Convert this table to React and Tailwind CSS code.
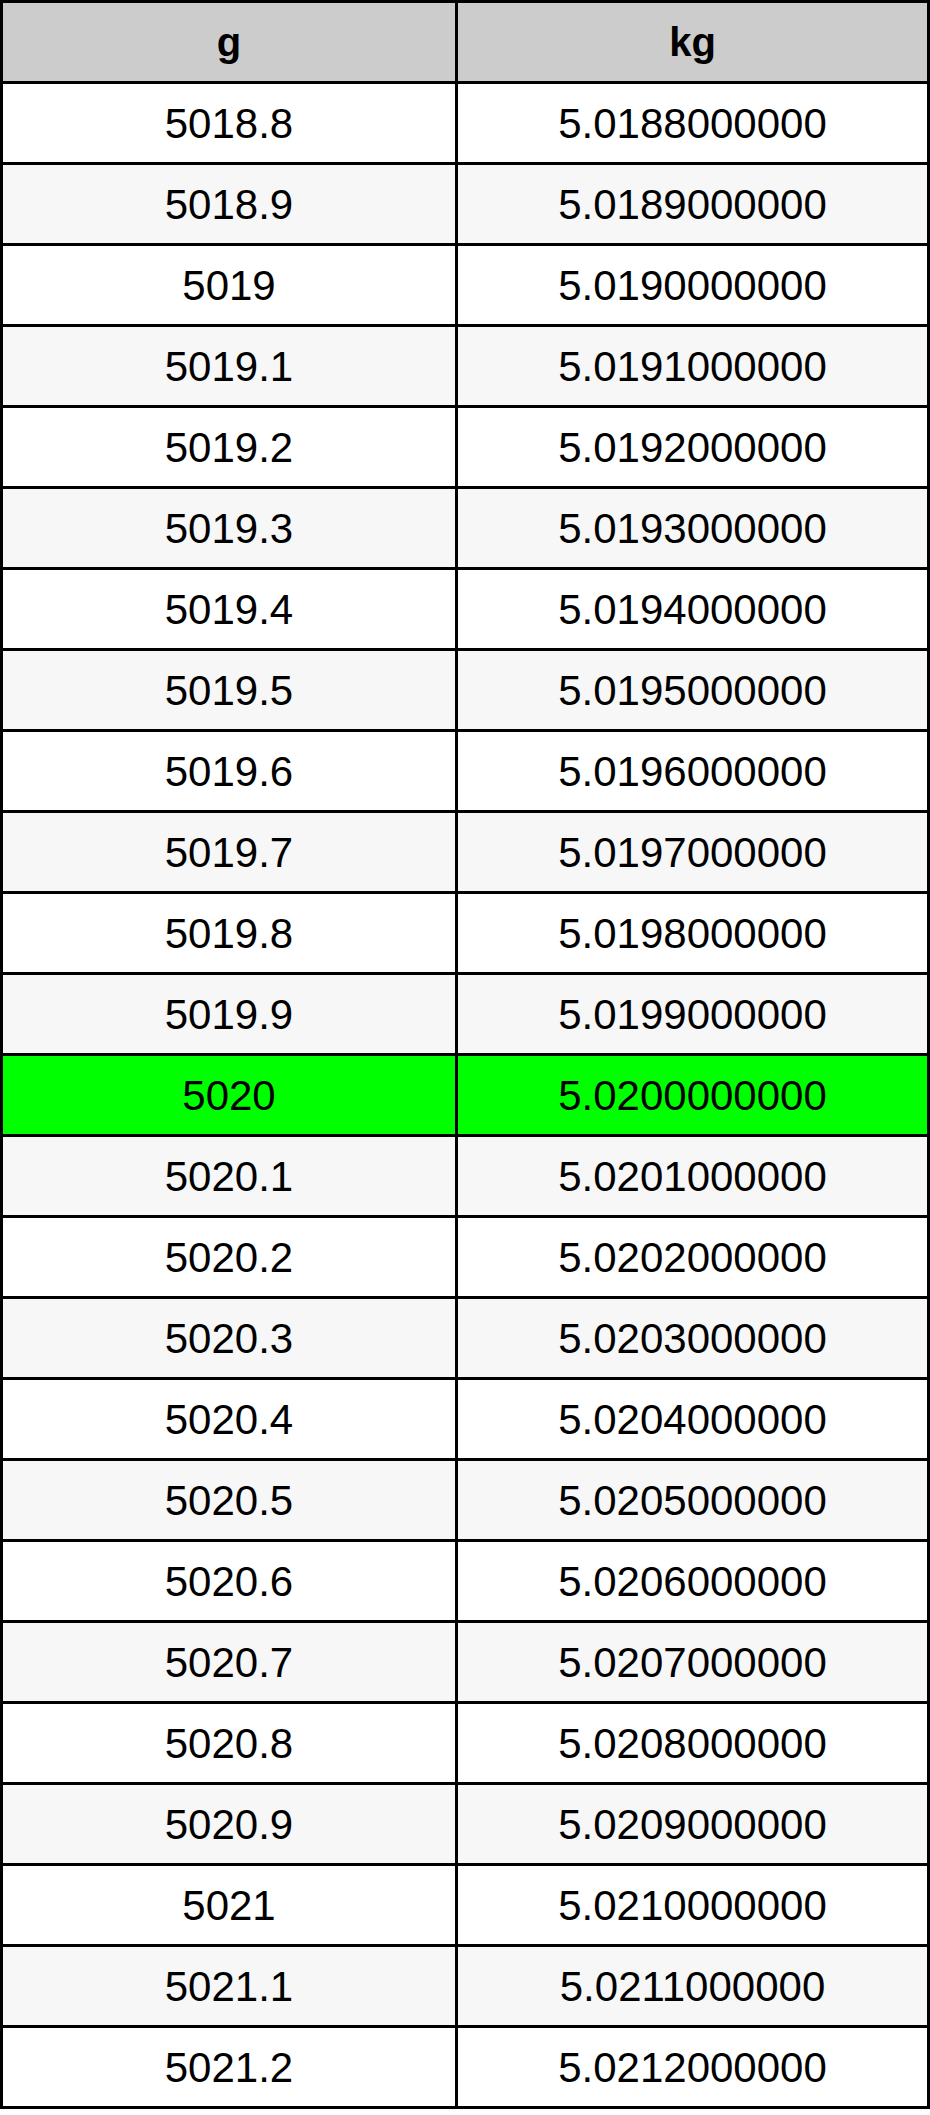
const rows = [
  ["5018.8", "5.0188000000"],
  ["5018.9", "5.0189000000"],
  ["5019", "5.0190000000"],
  ["5019.1", "5.0191000000"],
  ["5019.2", "5.0192000000"],
  ["5019.3", "5.0193000000"],
  ["5019.4", "5.0194000000"],
  ["5019.5", "5.0195000000"],
  ["5019.6", "5.0196000000"],
  ["5019.7", "5.0197000000"],
  ["5019.8", "5.0198000000"],
  ["5019.9", "5.0199000000"],
  ["5020", "5.0200000000"],
  ["5020.1", "5.0201000000"],
  ["5020.2", "5.0202000000"],
  ["5020.3", "5.0203000000"],
  ["5020.4", "5.0204000000"],
  ["5020.5", "5.0205000000"],
  ["5020.6", "5.0206000000"],
  ["5020.7", "5.0207000000"],
  ["5020.8", "5.0208000000"],
  ["5020.9", "5.0209000000"],
  ["5021", "5.0210000000"],
  ["5021.1", "5.0211000000"],
  ["5021.2", "5.0212000000"],
]

const cell = "h-[81px] flex items-center justify-center border-r-[3px] border-b-[3px] border-black"

export default function App() {
  return (
    <div className="w-[930px] bg-white font-['Liberation_Sans',Arial,sans-serif] text-black">
      <div className="grid grid-cols-[455px_472px] border-l-[3px] border-t-[3px] border-black">
        <div className={cell + " bg-[#cccccc] font-bold text-[40px]"}>g</div>
        <div className={cell + " bg-[#cccccc] font-bold text-[40px]"}>kg</div>
        {rows.map(([g, kg], i) => {
          const bg = g === "5020" ? " bg-[#00ff00]" : i % 2 === 1 ? " bg-[#f7f7f7]" : " bg-white"
          return [
            <div key={g + "a"} className={cell + bg + " text-[42px]"}>{g}</div>,
            <div key={g + "b"} className={cell + bg + " text-[42px]"}>{kg}</div>,
          ]
        })}
      </div>
    </div>
  )
}
